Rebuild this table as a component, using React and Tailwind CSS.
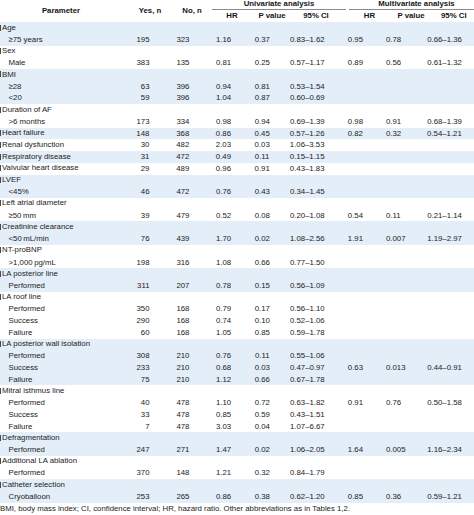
import React from 'react';

const groups = [
  { label: 'Age', rows: [['≥75 years', '195', '323', '1.16', '0.37', '0.83–1.62', '0.95', '0.78', '0.66–1.36']] },
  { label: 'Sex', rows: [['Male', '383', '135', '0.81', '0.25', '0.57–1.17', '0.89', '0.56', '0.61–1.32']] },
  {
    label: 'BMI',
    rows: [
      ['≥28', '63', '396', '0.94', '0.81', '0.53–1.54'],
      ['<20', '59', '396', '1.04', '0.87', '0.60–0.69'],
    ],
  },
  { label: 'Duration of AF', rows: [['>6 months', '173', '334', '0.98', '0.94', '0.69–1.39', '0.98', '0.91', '0.68–1.39']] },
  { single: ['Heart failure', '148', '368', '0.86', '0.45', '0.57–1.26', '0.82', '0.32', '0.54–1.21'] },
  { single: ['Renal dysfunction', '30', '482', '2.03', '0.03', '1.06–3.53'] },
  { single: ['Respiratory disease', '31', '472', '0.49', '0.11', '0.15–1.15'] },
  { single: ['Valvular heart disease', '29', '489', '0.96', '0.91', '0.43–1.83'] },
  { label: 'LVEF', rows: [['<45%', '46', '472', '0.76', '0.43', '0.34–1.45']] },
  { label: 'Left atrial diameter', rows: [['≥50\u2009mm', '39', '479', '0.52', '0.08', '0.20–1.08', '0.54', '0.11', '0.21–1.14']] },
  { label: 'Creatinine clearance', rows: [['<50\u2009mL/min', '76', '439', '1.70', '0.02', '1.08–2.56', '1.91', '0.007', '1.19–2.97']] },
  { label: 'NT-proBNP', rows: [['>1,000\u2009pg/mL', '198', '316', '1.08', '0.66', '0.77–1.50']] },
  { label: 'LA posterior line', rows: [['Performed', '311', '207', '0.78', '0.15', '0.56–1.09']] },
  {
    label: 'LA roof line',
    rows: [
      ['Performed', '350', '168', '0.79', '0.17', '0.56–1.10'],
      ['Success', '290', '168', '0.74', '0.10', '0.52–1.06'],
      ['Failure', '60', '168', '1.05', '0.85', '0.59–1.78'],
    ],
  },
  {
    label: 'LA posterior wall isolation',
    rows: [
      ['Performed', '308', '210', '0.76', '0.11', '0.55–1.06'],
      ['Success', '233', '210', '0.68', '0.03', '0.47–0.97', '0.63', '0.013', '0.44–0.91'],
      ['Failure', '75', '210', '1.12', '0.66', '0.67–1.78'],
    ],
  },
  {
    label: 'Mitral isthmus line',
    rows: [
      ['Performed', '40', '478', '1.10', '0.72', '0.63–1.82', '0.91', '0.76', '0.50–1.58'],
      ['Success', '33', '478', '0.85', '0.59', '0.43–1.51'],
      ['Failure', '7', '478', '3.03', '0.04', '1.07–6.67'],
    ],
  },
  { label: 'Defragmentation', rows: [['Performed', '247', '271', '1.47', '0.02', '1.06–2.05', '1.64', '0.005', '1.16–2.34']] },
  { label: 'Additional LA ablation', rows: [['Performed', '370', '148', '1.21', '0.32', '0.84–1.79']] },
  { label: 'Catheter selection', rows: [['Cryoballoon', '253', '265', '0.86', '0.38', '0.62–1.20', '0.85', '0.36', '0.59–1.21']] },
];

function ParentLabel({ children }) {
  return (
    <span className="inline-flex items-center">
      <span className="w-px h-[6px] bg-[#4a4a4a] mr-px" />
      {children}
    </span>
  );
}

function Cells({ v }) {
  return (
    <>
      <div className="w-[50px] text-right pr-[16px]">{v[1]}</div>
      <div className="w-[40px] text-right pr-[15px]">{v[2]}</div>
      <div className="w-[40px] text-right pr-[12px]">{v[3]}</div>
      <div className="w-[40px] text-center">{v[4]}</div>
      <div className="w-[56px] pl-[8.5px]">{v[5]}</div>
      <div className="w-[42px] text-center">{v[6]}</div>
      <div className="w-[42px] pl-[10.5px]">{v[7]}</div>
      <div className="w-[60px] pl-[11px] whitespace-nowrap">{v[8]}</div>
    </>
  );
}

function Row({ children }) {
  return <div className="flex items-center h-[11.73px] whitespace-nowrap">{children}</div>;
}

export default function App() {
  return (
    <div
      className="w-[474px] h-[515px] overflow-hidden bg-white text-[#222] text-[7.8px] leading-none"
      style={{ fontFamily: '"Liberation Sans", Arial, Helvetica, sans-serif' }}
    >
      {/* Header */}
      <div className="flex h-[22.2px] font-bold text-[#151515] w-[490px]">
        <div className="w-[122px] flex items-center justify-center">Parameter</div>
        <div className="w-[50px] flex items-center justify-center pl-[6px]">Yes, n</div>
        <div className="w-[40px] flex items-center justify-center">No, n</div>
        <div className="w-[136px] flex flex-col pr-[2px]">
          <div className="h-[9.5px] flex items-center justify-center border-b border-[#8a8a8a]">Univariate analysis</div>
          <div className="flex flex-1 items-center">
            <div className="w-[40px] text-center">HR</div>
            <div className="w-[40px] text-center">P value</div>
            <div className="w-[54px] text-center pr-[6px]">95% CI</div>
          </div>
        </div>
        <div className="w-[136px] flex flex-col pl-[1px]">
          <div className="h-[9.5px] flex items-center justify-center border-b border-[#8a8a8a]">Multivariate analysis</div>
          <div className="flex flex-1 items-center">
            <div className="w-[41px] text-center">HR</div>
            <div className="w-[42px] text-center">P value</div>
            <div className="w-[52px] pl-[9px]">95% CI</div>
          </div>
        </div>
      </div>

      {/* Body */}
      {groups.map((g, gi) => (
        <div key={gi} className={gi % 2 === 0 ? 'bg-[#e3eef8]' : 'bg-white'}>
          {g.single ? (
            <Row>
              <div className="w-[122px]">
                <ParentLabel>{g.single[0]}</ParentLabel>
              </div>
              <Cells v={g.single} />
            </Row>
          ) : (
            <>
              <Row>
                <div className="w-[122px]">
                  <ParentLabel>{g.label}</ParentLabel>
                </div>
              </Row>
              {g.rows.map((r, ri) => (
                <Row key={ri}>
                  <div className="w-[122px] pl-[8.5px]">{r[0]}</div>
                  <Cells v={r} />
                </Row>
              ))}
            </>
          )}
        </div>
      ))}

      {/* Footnote */}
      <div className="pt-[2px] whitespace-nowrap">
        BMI, body mass index; CI, confidence interval; HR, hazard ratio. Other abbreviations as in Tables 1,2.
      </div>
    </div>
  );
}
